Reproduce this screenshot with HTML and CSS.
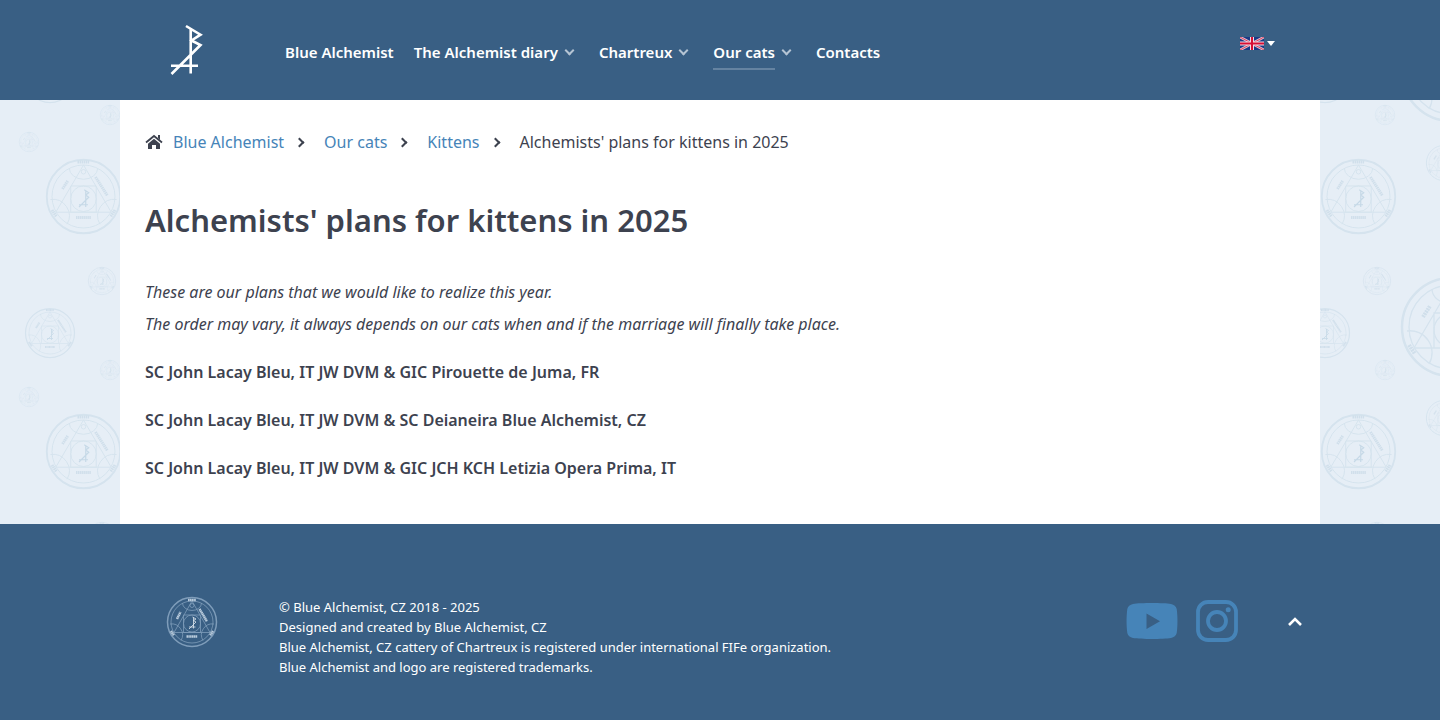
FILE: index.html
```html
<!DOCTYPE html>
<html lang="en">
<head>
    <meta charset="UTF-8">
    <meta name="viewport" content="width=device-width, initial-scale=1.0">
    <title>Alchemists' plans for kittens in 2025</title>
    <link rel="stylesheet" href="styles.css">
</head>
<body>
    <header class="site-header">
        <div class="container header-inner">
            <a class="logo" href="#" aria-label="Blue Alchemist home">
                <svg width="33" height="52" viewBox="0 0 33 52" fill="none" stroke="#fff" stroke-width="2.6">
                    <path d="M16 2L30.500 10.700L21.500 16.500L30.500 21L1.500 50M20.700 4V49.500M1 41.700H28"/>
                </svg>
            </a>
            <nav class="main-nav">
                <a href="#">Blue Alchemist</a>
                <a href="#" class="has-menu">The Alchemist diary</a>
                <a href="#" class="has-menu">Chartreux</a>
                <a href="#" class="has-menu active"><span>Our cats</span></a>
                <a href="#">Contacts</a>
            </nav>
            <button class="language" aria-label="Language: English">
                <svg width="24" height="13" viewBox="0 0 24 13">
                    <path fill="#1a3a86" d="M0 0h24v13H0z"/>
                    <path stroke="#e3c0d0" stroke-width="2.600" d="M0 0l24 13M24 0L0 13"/>
                    <path stroke="#dc4560" d="M0 0l24 13M24 0L0 13"/>
                    <path stroke="#f3dce4" stroke-width="4" d="M12 0v13M0 6.500h24"/>
                    <path stroke="#d80f35" stroke-width="2" d="M12 0v13M0 6.500h24"/>
                </svg>
                <span class="caret"></span>
            </button>
        </div>
    </header>

    <main class="container content">
        <nav class="breadcrumbs" aria-label="Breadcrumbs">
            <svg class="home" width="18" height="16" viewBox="0 0 18 16">
                <path fill="none" stroke="currentColor" stroke-width="1.800" d="M1 8.500L9 2l8 6.500"/>
                <path fill="currentColor" d="M13 1h2v5l-2-2zM9 4.800l6 5V15h-4v-4H7v4H3V9.800z"/>
            </svg>
            <a href="#">Blue Alchemist</a>
            <a href="#">Our cats</a>
            <a href="#">Kittens</a>
            <span>Alchemists' plans for kittens in 2025</span>
        </nav>
        <h1>Alchemists' plans for kittens in 2025</h1>
        <p><em>These are our plans that we would like to realize this year.<br>
        The order may vary, it always depends on our cats when and if the marriage will finally take place.</em></p>
        <p><strong>SC John Lacay Bleu, IT JW DVM &amp; GIC Pirouette de Juma, FR</strong></p>
        <p><strong>SC John Lacay Bleu, IT JW DVM &amp; SC Deianeira Blue Alchemist, CZ</strong></p>
        <p><strong>SC John Lacay Bleu, IT JW DVM &amp; GIC JCH KCH Letizia Opera Prima, IT</strong></p>
    </main>

    <footer class="site-footer">
        <div class="container footer-inner">
            <svg class="emblem" width="52" height="52" viewBox="-52 -52 104 104" fill="none" stroke="#7f9dba" stroke-width="1.600">
                <circle r="49" stroke-width="3"/>
                <circle r="42"/>
                <path d="M0-42L-36 21H36zM-17-14h34v35h-34z"/>
                <circle cy="3" r="17"/>
                <circle cy="-33" r="4"/>
                <path d="M-19-38a19 15 0 0 0 38 0M-44 4a22 22 0 0 1 22 33M44 4a22 22 0 0 0-22 33"/>
                <path stroke="#b9cbdc" stroke-width="5" stroke-dasharray="3 .6" d="M-8-44H8M-11 29H11M-30-6l7-14M15-26l15 25M-42 18l6 9M42 18l-6 9"/>
                <path stroke="#dfe8f0" d="M1-10l7 4-5 3 5 3L-6 14M3-9v22M-6 10H7"/>
            </svg>
            <p class="copyright">© Blue Alchemist, CZ 2018 - 2025<br>
            Designed and created by Blue Alchemist, CZ<br>
            Blue Alchemist, CZ cattery of Chartreux is registered under international FIFe organization.<br>
            Blue Alchemist and logo are registered trademarks.</p>
            <div class="social">
                <a href="#" aria-label="YouTube">
                    <svg width="52" height="36" viewBox="0 0 52 36">
                        <path fill="currentColor" fill-rule="evenodd" d="M26 0c8 0 15 .3 19 1 3 .6 5.200 2.500 5.700 5 1 7 1 17 0 24-.5 2.700-2.700 4.400-5.700 5-8 1.300-30 1.300-38 0-3-.6-5.200-2.300-5.700-5-1-7-1-17 0-24C1.800 3.500 4 1.600 7 1c4-.7 11-1 19-1zM20.500 10.500v15.400L34 18.200z"/>
                    </svg>
                </a>
                <a href="#" aria-label="Instagram">
                    <svg width="42" height="42" viewBox="0 0 42 42" fill="none" stroke="currentColor" stroke-width="3.800">
                        <rect x="2" y="2" width="38" height="38" rx="10"/>
                        <circle cx="21" cy="21" r="9"/>
                        <circle cx="32.200" cy="9.800" r="2.500" fill="currentColor" stroke="none"/>
                    </svg>
                </a>
            </div>
            <a class="to-top" href="#" aria-label="Back to top">
                <svg width="14" height="9" viewBox="0 0 14 9" fill="none" stroke="#fff" stroke-width="2.600"><path d="M1 8l6-6 6 6"/></svg>
            </a>
        </div>
    </footer>
</body>
</html>
```
FILE: styles.css
```css
* {
    box-sizing: border-box;
}
body {
    display: flex;
    flex-direction: column;
    min-height: 100vh;
    margin: 0;
    color: #3d424f;
    font-family: "Noto Sans", "Open Sans", sans-serif;
    font-size: 16px;
    line-height: 32px;
    background: #e6eef6 url("data:image/svg+xml,%3Csvg xmlns='http://www.w3.org/2000/svg' width='255' height='255'%3E%3Cdefs%3E%3Cg id='e' fill='none' stroke='%23d5e3ee' stroke-width='1.300'%3E%3Ccircle r='49' stroke-width='2.500'/%3E%3Ccircle r='42'/%3E%3Cpath d='M0-42L-37 21H37zM-17-14h34v35h-34z'/%3E%3Ccircle cy='3' r='17'/%3E%3Ccircle cy='-33' r='3'/%3E%3Cpath d='M-19-38a19 15 0 0 0 38 0M-44 4a22 22 0 0 1 22 33M44 4a22 22 0 0 0-22 33'/%3E%3Cpath stroke='%23d0dfeb' stroke-width='4' stroke-dasharray='2 .7' d='M-8-46H8M-10 28H10M-28-10l7-11M16-26l16 25M-42 18l6 9M42 18l-6 9'/%3E%3Cpath stroke='%23c6d9e7' stroke-width='1.600' d='M1-9l6 4-4 3 4 3-13 13M3-8v22M-6 11H6'/%3E%3C/g%3E%3C/defs%3E%3Cuse href='%23e' transform='translate(83.500 196.500) scale(.75)'/%3E%3Cuse href='%23e' transform='translate(29 142) scale(.2)'/%3E%3Cuse href='%23e' transform='translate(110 115) scale(.2)'/%3E%3Cuse href='%23e' transform='translate(102 26) scale(.28)'/%3E%3Cuse href='%23e' transform='translate(50 78) scale(.5)'/%3E%3Cuse href='%23e' transform='translate(176 72)'/%3E%3Cuse href='%23e' transform='translate(169 163) scale(.36)'/%3E%3C/svg%3E");
}
a {
    color: #4684b8;
    text-decoration: none;
}
.container {
    width: 100%;
    max-width: 1200px;
    margin: 0 auto;
    padding: 0 25px;
}

/* header */
.site-header {
    background: #395f84;
}
.header-inner {
    display: flex;
    align-items: center;
    height: 100px;
    padding: 0 45px 0 50px;
}
.logo {
    display: flex;
    width: 115px;
}
.main-nav {
    display: flex;
    gap: 20px;
    flex: 1;
    padding-top: 4px;
    font-size: 15px;
    font-weight: 600;
}
.main-nav a {
    display: flex;
    align-items: center;
    color: #fff;
}
.main-nav .active span {
    margin-bottom: -2px;
    border-bottom: 2px solid #6583a1;
}
.has-menu::after {
    content: "";
    width: 5px;
    height: 5px;
    margin: -4px 6px 0 8px;
    border: solid #b5c4d3;
    border-width: 0 2px 2px 0;
    transform: rotate(45deg);
}
.language {
    display: flex;
    align-items: center;
    gap: 3px;
    margin-bottom: 14px;
    padding: 0;
    border: 0;
    background: none;
}
.caret {
    border: 4px solid transparent;
    border-top: 5px solid #fff;
    border-bottom: 0;
}

/* content */
.content {
    flex: 1;
    padding-top: 26px;
    padding-bottom: 24px;
    background: #fff;
}
.breadcrumbs {
    display: flex;
    align-items: center;
}
.home {
    margin-right: 10px;
}
.breadcrumbs a {
    display: flex;
    align-items: center;
}
.breadcrumbs a::after {
    content: "";
    width: 5px;
    height: 5px;
    margin: 0 21px 0 12px;
    border: solid #3d424f;
    border-width: 2px 2px 0 0;
    transform: rotate(45deg);
}
h1 {
    margin: 36px 0 30px;
    font-size: 31px;
    font-weight: 600;
    line-height: 52px;
}
p {
    margin: 0 0 16px;
}
strong {
    font-weight: 600;
}

/* footer */
.site-footer {
    background: #395f84;
    color: #fff;
}
.footer-inner {
    display: flex;
    align-items: flex-start;
    min-height: 196px;
    padding: 72px 18px 24px 46px;
}
.emblem {
    margin-right: 61px;
}
.copyright {
    flex: 1;
    margin: 0;
    font-size: 13px;
    line-height: 20px;
    padding-top: 1px;
}
.social {
    display: flex;
    align-items: center;
    gap: 18px;
    padding-top: 4px;
}
.social a {
    display: flex;
}
.to-top {
    display: flex;
    margin-left: 50px;
    padding-top: 21px;
}
```
